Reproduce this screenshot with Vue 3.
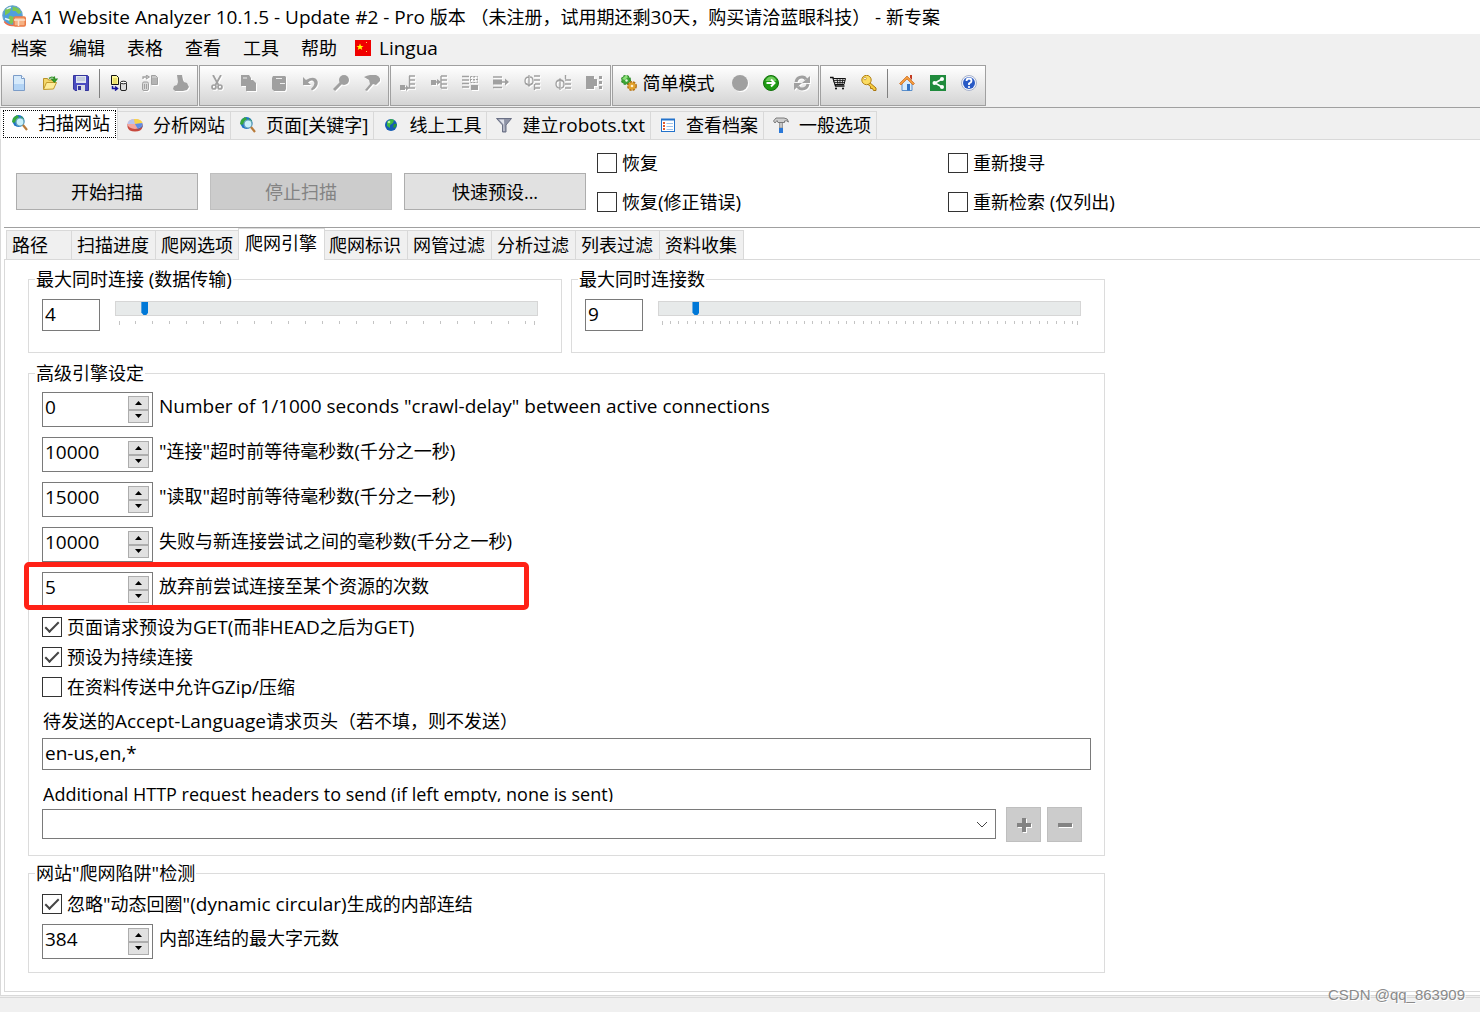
<script setup>
import { h, reactive, ref } from 'vue'

// Latin runs are set one step larger than the Chinese text around them.
const Mixed = (props) =>
  props.t
    .split(/([\x21-\x7e][\x20-\x7e]*)/)
    .filter(Boolean)
    .map((part) => (/^[\x21-\x7e]/.test(part) ? h('span', { class: 'latin' }, part) : part))
Mixed.props = ['t']

const G = '#a0a0a0'
const icons = {
  app: '<circle cx="7" cy="7" r="6.5" fill="#4f9fdc"/><path d="M2 3 5 1l1 2-1 2-3 2zM7 1l4 1 2 3-2 1-2-2-2 0zM5 7l3 1 0 3-2 2-2-3z" fill="#7cc653"/><path d="M3 2.500 6 1.500M2 9l3 1" stroke="#e8f6ff"/><circle cx="7" cy="7" r="6.500" fill="none" stroke="#6aa6c8" stroke-width=".7"/><path d="M1.500 11q3 3.500 7 2.500" stroke="#ef6d4a" fill="none"/><rect x="8" y="8" width="7.500" height="6" rx=".8" fill="#f6b183" stroke="#ea7a45"/><path d="M8 10h7.500M11 10v4" stroke="#fbe3cf"/>',
  newFile: '<path d="M2.500 .5h8l3 3v12h-11z" fill="#d6eafb" stroke="#7b9cc8"/><path d="M3 9h10v6H3z" fill="#b3d4f5"/><path d="M10.500.5v3h3" fill="#fff" stroke="#7b9cc8"/>',
  open: '<path d="M1.500 14V3.500h4l1 1.500h5v3" fill="#f4d76a" stroke="#b8922b"/><path d="M1.500 14.500 4.500 7.500h10l-3 6.500z" fill="#fdec9a" stroke="#c29a2c"/><path d="M7 3.500q3-3 5.500 0V1.500M12.500 7 15 4H9.500z" fill="#42a832" stroke="#2f8f25" stroke-width="1.200"/>',
  save: '<path d="M.5 .5h14l1 1v14H2L.5 14z" fill="#4a4bc0" stroke="#34359b"/><rect x="3" y="1" width="10" height="7" fill="#dfe5f1"/><path d="M4 3h8M4 5h8" stroke="#a9b4cc"/><rect x="4" y="10" width="8" height="6" fill="#d9dbe4"/><rect x="5" y="11" width="3" height="4" fill="#34359b"/>',
  copyDb: '<path d="M.5.5h5l2 2v7h-7z" fill="#fff89a" stroke="#111"/><path d="M2 4h4M2 6h4M2 8h4" stroke="#d7c840"/><path d="M1.500 11v2.500h4M4 11.500l2.500 2L4 15.500" fill="none" stroke="#14149a" stroke-width="1.500"/><rect x="9.500" y="7" width="6" height="8.500" rx="1.500" fill="#ddd" stroke="#222"/><ellipse cx="12.500" cy="7.500" rx="3" ry="1.300" fill="#fff" stroke="#222"/>',
  dbCopy: `<path d="M9.500.5h4l2 2v7h-6z" fill="#c8c8c8" stroke="${G}"/><path d="M10 4h5M10 6h5M10 8h5" stroke="${G}"/><path d="M1 4V2h4M4 0l3 2-3 2" fill="none" stroke="${G}" stroke-width="1.300"/><rect x=".5" y="7" width="6" height="8.500" rx="1.500" fill="#d8d8d8" stroke="${G}"/><path d="M2.500 9v5M4.500 9v5" stroke="${G}"/>`,
  stamp: `<path d="M4 0h5l1 5 1 2 3 1 2 4-2 3-4 1H2L0 14l1-3 3-1 1-3z" fill="${G}"/>`,
  cut: `<path d="M4 0 9.500 10M12 0 6.500 10" stroke="${G}" stroke-width="1.800"/><circle cx="5" cy="12" r="2" fill="none" stroke="${G}" stroke-width="1.700"/><circle cx="11" cy="12" r="2" fill="none" stroke="${G}" stroke-width="1.700"/>`,
  copy: `<path d="M1 0h8l2 3v3H6v5H1z" fill="${G}"/><path d="M3 3h4" stroke="#eee"/><path d="M6 5h7l3 3v8H6z" fill="${G}"/>`,
  paste: `<path d="M2 1h12l1 1v12l-1 2H3l-2-2V3z" fill="${G}"/><path d="M5 3.500h6M9 8.500h5" stroke="#eee"/>`,
  undo: `<path d="M1 2v8h8L6 7.500Q10 4 12 7q1.500 3-3 7l1 1.500q7-4 5.500-9.500-3-6-11.500-1z" fill="${G}"/>`,
  find: `<circle cx="11" cy="5" r="5" fill="${G}"/><path d="M8 8 1 15" stroke="${G}" stroke-width="3"/>`,
  findNext: `<path d="M0 2Q6-1 12 0q5 2 4 6l-4 4-3-1-6 7-2-1 5-6-1-4z" fill="${G}"/>`,
  rowA: `<path d="M9 1h6M9 5h6M9 9h6M9 13h6M9.500 1v12M5 13h5" stroke="${G}" stroke-width="1.400"/><path d="M0 10h5v5H0zM6 10l3 3-3 3z" fill="${G}"/>`,
  rowB: `<path d="M10 1h6M10 5h6M10 9h6M10 13h6M10 1v12M5 7h4" stroke="${G}" stroke-width="1.400"/><path d="M0 5h5v5H0zM6 4l4 3-4 3z" fill="${G}"/>`,
  rowC: `<path d="M0 1.500h7M0 5h7M0 8.500h7M0 12h7" stroke="${G}" stroke-width="1.500"/><path d="M8.500 1.500h7v6h-7zM12 1v7M8 4.500h8" fill="none" stroke="${G}" stroke-dasharray="2 1"/><path d="M9 10h7v5H9z" fill="${G}"/>`,
  rowD: `<path d="M0 2h9M0 12.500h9M9 7h5" stroke="${G}" stroke-width="1.500"/><path d="M0 4.500h9v5H0zM12 3.500 16 7l-4 3.500z" fill="${G}"/>`,
  rowE: `<path d="M10 1h6M10 5h6M11 9h5M11 13h5M10.500 9v6" stroke="${G}" stroke-width="1.400"/><path d="M5 2Q1 2 1 6t4 4q4 0 4-4T6 2M5 0v11M2.500 8.500 5 11l2.500-2.500" fill="none" stroke="${G}" stroke-width="1.300"/>`,
  rowF: `<path d="M10 5h6M10 9h6M10 13h6M10.500 0v4" stroke="${G}" stroke-width="1.400"/><path d="M5 13Q1 13 1 9t4-4q4 0 4 4t-3 4M5 15V4M2.500 6.500 5 4l2.500 2.500" fill="none" stroke="${G}" stroke-width="1.300"/>`,
  rowG: `<path d="M0 1h8v3h3v7H8v3H0zM13 1h3v3h-3zM13 6h3v3h-3zM13 11h3v3h-3z" fill="${G}"/>`,
  gears: '<circle cx="5" cy="5" r="4" fill="#3da635"/><circle cx="5" cy="5" r="4.300" fill="none" stroke="#2b8a25" stroke-width="1.500" stroke-dasharray="2.400 1"/><path d="M1 4 5 0l2 2-3 3z" fill="#8de07a"/><circle cx="5.500" cy="5.500" r="1.200" fill="#e9f7e6"/><circle cx="11" cy="11" r="3.800" fill="#e2a12a"/><circle cx="11" cy="11" r="4.200" fill="none" stroke="#b87412" stroke-width="1.500" stroke-dasharray="2.400 1"/><circle cx="11" cy="11" r="1.300" fill="#fff1cd"/>',
  dot: `<circle cx="8" cy="8" r="8" fill="${G}"/>`,
  go: '<circle cx="8" cy="8" r="7.500" fill="#1f9a14" stroke="#12700c"/><path d="M2.500 6Q4 1.500 8 1.500T13.500 6z" fill="#6fcc5c"/><path d="M3.500 8h8M8 4.500 11.500 8 8 11.500" fill="none" stroke="#fff" stroke-width="2"/>',
  refresh: `<path d="M2 7q1-5 6-5 3 0 4 2.500M14 9q-1 5-6 5-3 0-4-2.500" fill="none" stroke="${G}" stroke-width="3"/><path d="M8 8h8V1zM8 8H0v7z" fill="${G}"/>`,
  cart: '<path d="M0 2.500h3l2.500 8.500h9" fill="none" stroke="#111" stroke-width="1.300"/><path d="M3 3.500h12.500l-1.500 6H5z" fill="#ddd" stroke="#111"/><path d="M4 5.500h11M5 7.500h10M7 3.500l1 6M10 3.500v6M13 3.500l-1 6" stroke="#111" stroke-width=".8"/><circle cx="6" cy="13.500" r="1"/><circle cx="13" cy="13.500" r="1"/>',
  key: '<path d="M8 7 15 13v2.500H12.500l-1-2H9.500v-2L6.500 9" fill="#f6cc3e" stroke="#a9760f"/><circle cx="5.500" cy="5" r="4.700" fill="#fbdc62" stroke="#b07f14"/><circle cx="4" cy="3.500" r="1.300" fill="#fff" stroke="#a9760f" stroke-width=".6"/>',
  home: '<path d="M3 8v7.500h10V8L8 3z" fill="#d8ebfb" stroke="#5a8fcb"/><path d="M11 0h2v5l-2-2z" fill="#c33a20"/><path d="M.5 8.500 8 1l7.500 7.500L14 10 8 4 2 10z" fill="#f39b3c" stroke="#c9671c" stroke-width=".7"/><path d="M8 9h3v6.500H8z" fill="#3272c4"/>',
  share: '<rect width="16" height="16" fill="#1f8a3c"/><path d="M12 4 5 8l7 4" fill="none" stroke="#fff" stroke-width="1.600"/><circle cx="12" cy="4" r="2" fill="#fff"/><circle cx="4.500" cy="8" r="2" fill="#fff"/><circle cx="12" cy="12" r="2" fill="#fff"/>',
  help: '<circle cx="8" cy="8" r="7.500" fill="#f4f6fb" stroke="#a7b2cc"/><circle cx="8" cy="8" r="6" fill="#2859c5"/><path d="M5.500 6q0-2.500 2.500-2.500T10.500 6Q10.500 7.500 8 8.500V10" fill="none" stroke="#fff" stroke-width="1.800"/><circle cx="8" cy="12" r="1.100" fill="#fff"/>',
  globeFind: '<circle cx="6.500" cy="6" r="6" fill="#1f73c8"/><path d="M1 3 5 0l2 2-2 3-3 3-2-1zM9 1l3 3v4L9 6z" fill="#35a83b"/><circle cx="8" cy="7" r="4" fill="#c9f0fa" stroke="#5f9db8" stroke-width="1.200"/><path d="M11 10 15 15" stroke="#b97b3a" stroke-width="2.200"/>',
  pie: '<path d="M.5 7v3q1 4.500 7.500 4.500T15.500 10V7z" fill="#c8493e"/><path d="M10 13l5.500-3V7z" fill="#2e62bd"/><ellipse cx="8" cy="7" rx="7.500" ry="5" fill="#f3a7a0"/><path d="M8 7 .5 7Q1 2.500 7 2z" fill="#b9c4ee"/><path d="M8 7 7 2q7-.5 8.500 4z" fill="#f7d54a"/><path d="M8 7 15.500 6q0 4-5 5.500z" fill="#5b8fe8"/>',
  globe: '<circle cx="8" cy="8" r="6" fill="#155cb4"/><path d="M4 5 8 2l3 1-1 3-3 2v3L4 9z" fill="#3fb942"/><path d="M11 7l3 0-2 4-2-1z" fill="#299a35"/><circle cx="6" cy="5" r="1.300" fill="#b7f2a2"/>',
  funnel: '<path d="M.5 1.500h15L10 8v7H6.500V8z" fill="#8e93a6" stroke="#6a7085"/><path d="M3 2.500h5L8.500 14H7.500V7.500z" fill="#dfe2ea"/>',
  list: '<rect x="1.500" y="2.500" width="13" height="12" fill="#fff" stroke="#2372cb"/><path d="M1 2.500h14" stroke="#2372cb" stroke-width="2"/><path d="M3 6h2M3 9h2M3 12h2" stroke="#e25a2e" stroke-width="2"/><path d="M6.500 6.500H13M6.500 9.500H13M6.500 12.500H13" stroke="#9fc1e8"/>',
  hammer: '<path d="M6.500 5h3v6h-3z" fill="#c5c5c5" stroke="#808080" stroke-width=".7"/><path d="M6 11h4v5H6z" fill="#2a78d8"/><path d="M.5 4 3 1l8 0q4 0 4.500 4-2-2-4-1v1.500H5L4 3.500 2 6z" fill="#cfcfcf" stroke="#707070" stroke-width=".9"/>',
  flag: '<rect width="16" height="16" fill="#f00000"/><path d="M5 3.500 6 6h2.500l-2 1.500.8 2.500L5 8.500 2.700 10l.8-2.500-2-1.500H4z" fill="#ff0"/><path d="M11 2h1v1h-1zM12 11h-1v1h1z" fill="#fc6"/>',
}

const menus = ['档案', '编辑', '表格', '查看', '工具', '帮助']
const groups = [
  ['newFile', 'open', 'save', '|', 'copyDb', 'dbCopy', 'stamp'],
  ['cut', 'copy', 'paste', 'undo', 'find', 'findNext'],
  ['rowA', 'rowB', 'rowC', 'rowD', 'rowE', 'rowF', 'rowG'],
  ['gears', 'dot', 'go', 'refresh'],
  ['cart', 'key', '|', 'home', 'share', 'help'],
]
const disabledIcons = ['dbCopy', 'stamp', ...groups[1], ...groups[2], 'dot', 'refresh']

const mainTabs = [
  ['globeFind', '扫描网站'],
  ['pie', '分析网站'],
  ['globeFind', '页面[关键字]'],
  ['globe', '线上工具'],
  ['funnel', '建立robots.txt'],
  ['list', '查看档案'],
  ['hammer', '一般选项'],
]
const subTabs = ['路径', '扫描进度', '爬网选项', '爬网引擎', '爬网标识', '网管过滤', '分析过滤', '列表过滤', '资料收集']
const mainTab = ref(0)
const subTab = ref(3)

const runOptions = reactive([
  { label: '恢复', on: false },
  { label: '重新搜寻', on: false },
  { label: '恢复(修正错误)', on: false },
  { label: '重新检索 (仅列出)', on: false },
])

const sliders = reactive([
  { title: '最大同时连接 (数据传输)', value: 4, max: 50 },
  { title: '最大同时连接数', value: 9, max: 100 },
])
const ticks = (max) => {
  const list = []
  for (let v = 1; v < max; v += 2) list.push(((v - 1) / (max - 1)) * 100)
  return [...list, 100]
}

const spins = reactive([
  { label: 'Number of 1/1000 seconds "crawl-delay" between active connections', value: 0 },
  { label: '"连接"超时前等待毫秒数(千分之一秒)', value: 10000 },
  { label: '"读取"超时前等待毫秒数(千分之一秒)', value: 15000 },
  { label: '失败与新连接尝试之间的毫秒数(千分之一秒)', value: 10000 },
  { label: '放弃前尝试连接至某个资源的次数', value: 5, marked: true },
])
const trapSpin = reactive([{ label: '内部连结的最大字元数', value: 384 }])

const engineOptions = reactive([
  { label: '页面请求预设为GET(而非HEAD之后为GET)', on: true },
  { label: '预设为持续连接', on: true },
  { label: '在资料传送中允许GZip/压缩', on: false },
])
const trapOptions = reactive([{ label: '忽略"动态回圈"(dynamic circular)生成的内部连结', on: true }])
const acceptLanguage = ref('en-us,en,*')
</script>

<template>
  <div class="window">
    <header class="title-bar">
      <svg class="app-icon" viewBox="0 0 16 16" v-html="icons.app"></svg>
      <h1><Mixed t="A1 Website Analyzer 10.1.5 - Update #2 - Pro 版本 （未注册，试用期还剩30天，购买请洽蓝眼科技） - 新专案" /></h1>
    </header>

    <nav class="menu-bar">
      <button v-for="m in menus" :key="m" class="menu">{{ m }}</button>
      <button class="menu lingua">
        <svg class="icon" viewBox="0 0 16 16" v-html="icons.flag"></svg><Mixed t="Lingua" />
      </button>
    </nav>

    <div class="toolbar">
      <div v-for="(g, gi) in groups" :key="gi" class="tool-group">
        <template v-for="(name, i) in g" :key="i">
          <span v-if="name === '|'" class="tool-sep"></span>
          <button
            v-else
            class="tool"
            :class="{ wide: name === 'gears', off: disabledIcons.includes(name) }"
            :disabled="disabledIcons.includes(name)"
            :aria-label="name"
          >
            <svg class="icon" viewBox="0 0 16 16" v-html="icons[name]"></svg>
            <span v-if="name === 'gears'">简单模式</span>
          </button>
        </template>
      </div>
    </div>

    <div class="main-tabs" role="tablist">
      <button
        v-for="([icon, label], i) in mainTabs"
        :key="i"
        class="main-tab"
        :class="{ active: mainTab === i }"
        role="tab"
        @click="mainTab = i"
      >
        <svg class="icon" viewBox="0 0 16 16" v-html="icons[icon]"></svg>
        <span><Mixed :t="label" /></span>
      </button>
    </div>

    <main class="page">
      <section class="run-bar">
        <div class="run-buttons">
          <button class="push">开始扫描</button>
          <button class="push" disabled>停止扫描</button>
          <button class="push">快速预设...</button>
        </div>
        <div class="run-options">
          <label v-for="o in runOptions" :key="o.label" class="check">
            <input v-model="o.on" type="checkbox" /><span><Mixed :t="o.label" /></span>
          </label>
        </div>
      </section>

      <div class="sub-tabs" role="tablist">
        <button
          v-for="(label, i) in subTabs"
          :key="label"
          class="sub-tab"
          :class="{ active: subTab === i }"
          role="tab"
          @click="subTab = i"
        >{{ label }}</button>
      </div>

      <section class="panel">
        <div class="slider-row">
          <fieldset v-for="(s, i) in sliders" :key="i" class="group">
            <legend><Mixed :t="s.title" /></legend>
            <div class="slider-line">
              <input v-model="s.value" class="field count" type="text" :aria-label="s.title" />
              <div class="slider">
                <input v-model.number="s.value" type="range" min="1" :max="s.max" :aria-label="s.title" />
                <svg class="ticks">
                  <line
                    v-for="(x, ti) in ticks(s.max)"
                    :key="ti"
                    :x1="x + '%'"
                    :x2="x + '%'"
                    y1="0"
                    :y2="x === 0 || x === 100 ? 4 : 3"
                  />
                </svg>
              </div>
            </div>
          </fieldset>
        </div>

        <fieldset class="group engine">
          <legend>高级引擎设定</legend>
          <div class="spin-list">
            <label v-for="s in spins" :key="s.label" class="spin-row" :class="{ marked: s.marked }">
              <span class="spin">
                <input v-model="s.value" type="text" />
                <span class="arrows">
                  <button aria-label="增加" @click.prevent="s.value++"><svg viewBox="0 0 7 4"><path d="M0 4 3.500 0 7 4z" /></svg></button>
                  <button aria-label="减少" @click.prevent="s.value--"><svg viewBox="0 0 7 4"><path d="M0 0h7L3.500 4z" /></svg></button>
                </span>
              </span>
              <span class="spin-label"><Mixed :t="s.label" /></span>
            </label>
          </div>
          <div class="check-list">
            <label v-for="o in engineOptions" :key="o.label" class="check">
              <input v-model="o.on" type="checkbox" /><span><Mixed :t="o.label" /></span>
            </label>
          </div>
          <label class="caption" for="accept-language"><Mixed t="待发送的Accept-Language请求页头（若不填，则不发送）" /></label>
          <input id="accept-language" v-model="acceptLanguage" class="field wide-field" type="text" />
          <label class="caption cut-off" for="extra-headers">Additional HTTP request headers to send (if left empty, none is sent)</label>
          <div class="header-line">
            <span class="combo">
              <select id="extra-headers"><option></option></select>
              <svg viewBox="0 0 12 7"><path d="M1 1 6 6 11 1" /></svg>
            </span>
            <button class="square" disabled aria-label="添加"><svg viewBox="0 0 16 16"><path d="M6 1h4v5h5v4h-5v5H6v-5H1V6h5z" /></svg></button>
            <button class="square" disabled aria-label="移除"><svg viewBox="0 0 16 16"><path d="M1 6h14v4H1z" /></svg></button>
          </div>
        </fieldset>

        <fieldset class="group trap">
          <legend><Mixed t="网站&quot;爬网陷阱&quot;检测" /></legend>
          <label v-for="o in trapOptions" :key="o.label" class="check">
            <input v-model="o.on" type="checkbox" /><span><Mixed :t="o.label" /></span>
          </label>
          <label v-for="s in trapSpin" :key="s.label" class="spin-row">
            <span class="spin">
              <input v-model="s.value" type="text" />
              <span class="arrows">
                <button aria-label="增加" @click.prevent="s.value++"><svg viewBox="0 0 7 4"><path d="M0 4 3.500 0 7 4z" /></svg></button>
                <button aria-label="减少" @click.prevent="s.value--"><svg viewBox="0 0 7 4"><path d="M0 0h7L3.500 4z" /></svg></button>
              </span>
            </span>
            <span class="spin-label">{{ s.label }}</span>
          </label>
        </fieldset>
      </section>
    </main>

    <footer class="status-bar"><span class="watermark">CSDN @qq_863909</span></footer>
  </div>
</template>

<style>
body {
  background: #fff;
}
.latin {
  font-size: 19px;
}
</style>

<style scoped>
.window {
  box-sizing: border-box;
  min-height: 100vh;
  display: flex;
  flex-direction: column;
  background: #f0f0f0;
  color: #000;
  font-family: 'Open Sans', 'Noto Sans CJK SC', sans-serif;
  font-size: 18px;
  line-height: 22px;
  white-space: nowrap;
}
.window *,
.window *::before {
  box-sizing: border-box;
}
button,
input,
select {
  margin: 0;
  padding: 0;
  border: 0;
  border-radius: 0;
  background: none;
  color: inherit;
  font: inherit;
}
svg {
  display: block;
  flex: none;
}
.icon {
  width: 16px;
  height: 16px;
}

.title-bar {
  display: flex;
  align-items: center;
  gap: 5px;
  height: 34px;
  padding-left: 2px;
  background: #fff;
}
.app-icon {
  width: 24px;
  height: 24px;
}
h1 {
  margin: 0;
  font-size: 18px;
  font-weight: 400;
}

.menu-bar {
  display: flex;
  gap: 22px;
  height: 30px;
  padding: 0 0 2px 11px;
}
.menu {
  display: flex;
  align-items: center;
}
.lingua {
  gap: 8px;
  margin-left: -4px;
}

.toolbar {
  display: flex;
  gap: 1px;
  height: 44px;
  padding: 1px;
  border-bottom: 1px solid #a0a0a0;
}
.tool-group {
  display: flex;
  height: 41px;
  padding: 1px;
  border: 1px solid #a0a0a0;
  background: linear-gradient(#fff, #d4d4d4);
}
.tool {
  display: flex;
  align-items: center;
  justify-content: center;
  width: 31px;
  height: 32px;
}
.tool.wide {
  gap: 6px;
  width: 110px;
  padding-right: 3px;
  line-height: 20px;
}
.off .icon {
  filter: drop-shadow(1px 1px 0 #fff);
}
.tool-sep {
  width: 1px;
  height: 29px;
  margin: 2px 3px;
  background: #808080;
}

.main-tabs {
  display: flex;
  align-items: flex-end;
  height: 32px;
  padding-left: 1px;
  border-bottom: 1px solid #d9d9d9;
}
.main-tab {
  display: flex;
  align-items: center;
  gap: 10px;
  height: 28px;
  padding: 0 5px 1px 9px;
  border-top: 1px solid #d9d9d9;
  border-right: 1px solid #d9d9d9;
}
.main-tab.active {
  height: 32px;
  margin-bottom: -1px;
  padding: 0 7px 2px 11px;
  border-top: 0;
  background: #fff;
  outline: 1px dotted #000;
  outline-offset: -3px;
}

.page {
  flex: 1;
  display: flex;
  flex-direction: column;
  padding: 0 0 3px 3px;
  border-left: 1px solid #d9d9d9;
  border-bottom: 1px solid #d9d9d9;
  background: #fff;
}
.run-bar {
  display: flex;
  gap: 11px;
  height: 88px;
  padding: 13px 0 0 12px;
  border-bottom: 1px solid #a0a0a0;
}
.run-buttons {
  display: flex;
  gap: 12px;
  padding-top: 20px;
}
.push {
  width: 182px;
  height: 37px;
  border: 1px solid #adadad;
  background: #e1e1e1;
}
.push:disabled {
  border-color: #bfbfbf;
  background: #ccc;
  color: #838383;
}
.run-options {
  display: grid;
  grid-template-columns: 351px auto;
  grid-auto-rows: 20px;
  row-gap: 19px;
}

.check {
  display: flex;
  align-items: center;
  gap: 5px;
  height: 20px;
}
.check input {
  appearance: none;
  flex: none;
  width: 20px;
  height: 20px;
  border: 1px solid #333;
  background: #fff;
}
.check input:checked::before {
  content: '';
  display: block;
  width: 14px;
  height: 7px;
  margin: 4px 0 0 2px;
  border-left: 2px solid #444;
  border-bottom: 2px solid #444;
  transform: rotate(-45deg);
}

.sub-tabs {
  display: flex;
  align-items: flex-end;
  height: 31px;
  padding-left: 2px;
}
.sub-tab {
  width: 84px;
  height: 29px;
  padding-left: 5px;
  border-top: 1px solid #d9d9d9;
  border-right: 1px solid #d9d9d9;
  background: #f0f0f0;
  text-align: left;
}
.sub-tab:first-child {
  width: 66px;
  border-left: 1px solid #d9d9d9;
}
.sub-tab.active {
  position: relative;
  width: 87px;
  height: 32px;
  margin: 0 -1px -1px -2px;
  padding: 0 0 3px 6px;
  border-left: 1px solid #d9d9d9;
  background: #fff;
}

.panel {
  flex: 1;
  display: flex;
  flex-direction: column;
  gap: 9px;
  padding: 8px 23px 18px;
  border: 1px solid #d9d9d9;
  border-right: 0;
}
.group {
  min-width: 0;
  max-width: 1077px;
  margin: 0;
  padding: 0 13px;
  border: 1px solid #dcdcdc;
}
legend {
  height: 22px;
  margin-left: -7px;
  padding: 0 1px;
}
.slider-row {
  display: grid;
  grid-template-columns: 1fr 1fr;
  gap: 9px;
  max-width: 1077px;
}
.slider-row .group {
  padding: 9px 23px 21px 13px;
}
.slider-line {
  display: flex;
  gap: 15px;
}
.field {
  border: 1px solid #7a7a7a;
  background: #fff;
  height: 32px;
  padding: 0 2px 2px;
  font-size: 19px;
}
.count {
  width: 58px;
}
.slider {
  flex: 1;
  padding-top: 2px;
}
.slider input {
  appearance: none;
  display: block;
  width: 100%;
  height: 15px;
  border: 1px solid #d6d6d6;
  background: #e7eaea;
}
.slider input::-webkit-slider-thumb {
  appearance: none;
  width: 7px;
  height: 13px;
  background: #0078d7;
  clip-path: polygon(0 0, 100% 0, 100% 80%, 70% 100%, 30% 100%, 0 80%);
}
.ticks {
  width: calc(100% - 8px);
  height: 4px;
  margin: 5px 4px 0;
  overflow: visible;
}
.ticks line {
  stroke: #c4c4c4;
  shape-rendering: crispEdges;
}

.engine {
  padding-top: 8px;
  padding-bottom: 13px;
}
.spin-list,
.check-list {
  display: flex;
  flex-direction: column;
  gap: 10px;
  margin-bottom: 10px;
}
.spin-row {
  position: relative;
  display: flex;
  gap: 6px;
  height: 35px;
}
.spin {
  display: flex;
  width: 111px;
  padding: 3px 3px 3px 2px;
  border: 1px solid #7a7a7a;
  background: #fff;
}
.spin input {
  flex: 1;
  min-width: 0;
  height: 22px;
  font-size: 19px;
}
.arrows {
  display: flex;
  flex-direction: column;
}
.arrows button {
  display: flex;
  align-items: center;
  justify-content: center;
  width: 21px;
  height: 14px;
  border: 1px solid #adadad;
  background: #e1e1e1;
}
.arrows svg {
  width: 7px;
  height: 4px;
}
.spin-label {
  padding-top: 3px;
}
.marked::before {
  content: '';
  position: absolute;
  top: -10px;
  left: -18px;
  width: 505px;
  height: 48px;
  border: 5px solid #ff2116;
  border-radius: 5px;
}
.caption {
  display: block;
  margin: 13px 1px 6px;
}
.wide-field {
  display: block;
  width: 100%;
}
.cut-off {
  height: 19px;
  margin-bottom: 5px;
  overflow: hidden;
}
.header-line {
  display: flex;
  align-items: flex-start;
  padding-right: 9px;
}
.combo {
  flex: 1;
  display: flex;
  position: relative;
  margin: 2px 10px 0 0;
}
.combo select {
  appearance: none;
  width: 100%;
  height: 30px;
  border: 1px solid #7a7a7a;
  background: #fff;
}
.combo svg {
  position: absolute;
  right: 8px;
  top: 12px;
  width: 12px;
  height: 7px;
  fill: none;
  stroke: #444;
  pointer-events: none;
}
.square {
  display: flex;
  align-items: center;
  justify-content: center;
  width: 35px;
  height: 35px;
  border: 1px solid #bfbfbf;
  background: #ccc;
}
.square + .square {
  margin-left: 6px;
}
.square svg {
  width: 16px;
  height: 16px;
  fill: #838383;
  filter: drop-shadow(1px 1px 0 #fff);
}
.trap {
  margin-top: -3px;
  padding-top: 10px;
  padding-bottom: 13px;
}
.trap .spin-row {
  margin-top: 10px;
}

.status-bar {
  position: relative;
  height: 15px;
  margin-top: 1px;
  border-top: 1px solid #d9d9d9;
}
.watermark {
  position: absolute;
  right: 15px;
  bottom: 6px;
  color: #8a8a8a;
  font-family: 'Liberation Sans', sans-serif;
  font-size: 15px;
  text-shadow: 1px 1px 0 #fff;
}
</style>
